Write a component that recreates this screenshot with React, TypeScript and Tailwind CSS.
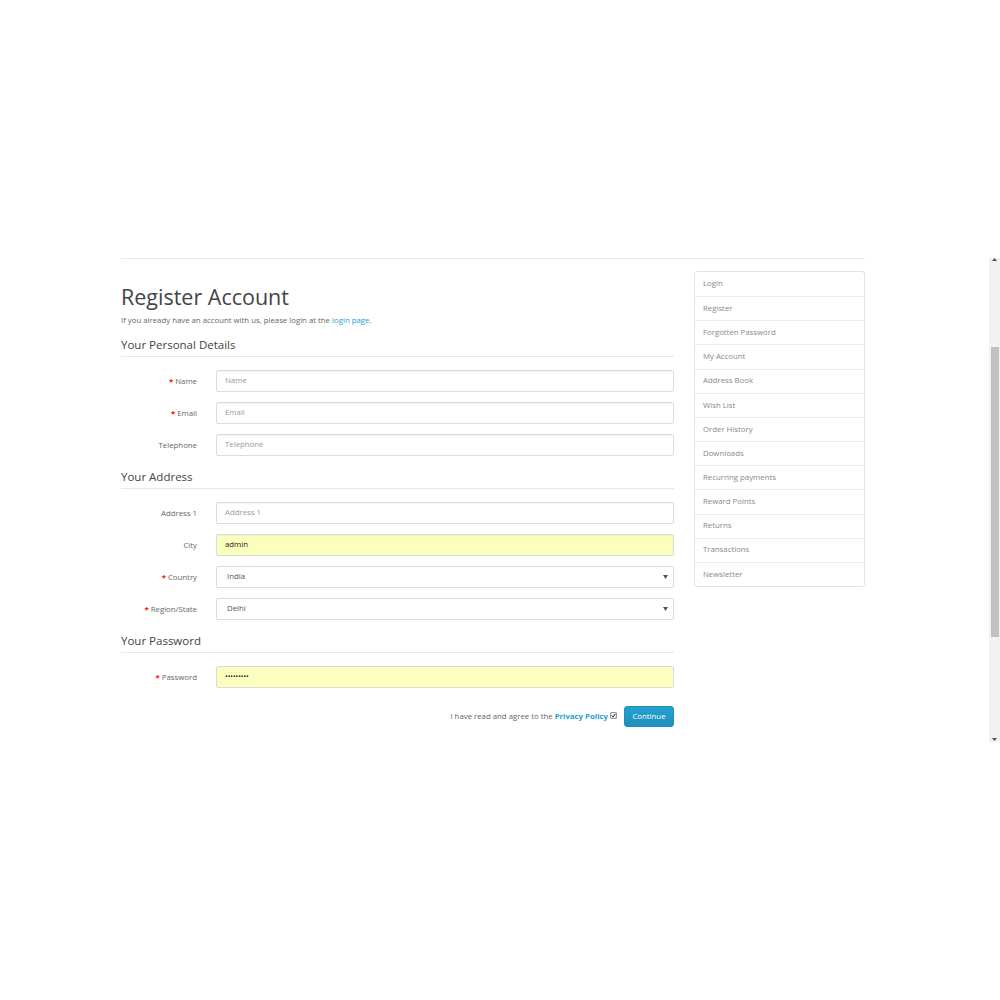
import React from "react";

const font = { fontFamily: '"Open Sans", "Liberation Sans", sans-serif' };

const sideLinks = [
  "Login",
  "Register",
  "Forgotten Password",
  "My Account",
  "Address Book",
  "Wish List",
  "Order History",
  "Downloads",
  "Recurring payments",
  "Reward Points",
  "Returns",
  "Transactions",
  "Newsletter",
];

function Label({ text, required }: { text: string; required?: boolean }) {
  return (
    <div className="w-[76px] shrink-0 text-right text-[7.8px] leading-[12px] text-[#666]">
      {required && <span className="mr-[2px] font-bold text-[#f00]">*</span>}
      {text}
    </div>
  );
}

function Field({
  label,
  required,
  placeholder,
  value,
  autofill,
}: {
  label: string;
  required?: boolean;
  placeholder?: string;
  value?: string;
  autofill?: boolean;
}) {
  return (
    <div className="flex h-[22px] items-center gap-[19px]">
      <Label text={label} required={required} />
      <div
        className={`flex h-[22px] flex-1 items-center rounded-[2px] border border-[#dcdcdc] px-[8px] text-[7.8px] shadow-[inset_0_1px_1px_rgba(0,0,0,0.04)] ${
          autofill ? "bg-[#faffbd] text-[#222]" : "bg-white text-[#999]"
        }`}
      >
        {value ?? placeholder}
      </div>
    </div>
  );
}

function SelectField({ label, value }: { label: string; value: string }) {
  return (
    <div className="flex h-[22px] items-center gap-[19px]">
      <Label text={label} required />
      <div className="flex h-[22px] flex-1 items-center justify-between rounded-[2px] border border-[#dcdcdc] bg-white pl-[10px] pr-[5px] text-[7.8px] text-[#555]">
        <span>{value}</span>
        <svg width="5" height="4" viewBox="0 0 5 4">
          <path d="M0 0 H5 L2.5 4 Z" fill="#555" />
        </svg>
      </div>
    </div>
  );
}

function Legend({ children, mt }: { children: React.ReactNode; mt: string }) {
  return (
    <div className={`${mt} border-b border-[#e8e8e8] pb-[2px] text-[11.5px] leading-[18px] text-[#444]`}>
      {children}
    </div>
  );
}

export default function App() {
  return (
    <div className="flex h-[1000px] w-[1000px] bg-white pt-[258px]" style={font}>
      <div className="ml-[121px] w-[744px] self-start border-t border-[#e8e8e8]">
        <div className="flex gap-[20px]">
          {/* form column */}
          <div className="w-[553px]">
            <h1 className="mt-[25px] text-[21.5px] leading-[26px] font-normal text-[#444]">Register Account</h1>
            <p className="mt-[4px] text-[7.8px] leading-[13px] text-[#666]">
              If you already have an account with us, please login at the{" "}
              <span className="text-[#23a1d1]">login page</span>.
            </p>

            <Legend mt="mt-[9px]">Your Personal Details</Legend>
            <div className="mt-[13px] flex flex-col gap-[10px]">
              <Field label="Name" required placeholder="Name" />
              <Field label="Email" required placeholder="Email" />
              <Field label="Telephone" placeholder="Telephone" />
            </div>

            <Legend mt="mt-[12px]">Your Address</Legend>
            <div className="mt-[13px] flex flex-col gap-[10px]">
              <Field label="Address 1" placeholder="Address 1" />
              <Field label="City" value="admin" autofill />
              <SelectField label="Country" value="India" />
              <SelectField label="Region/State" value="Delhi" />
            </div>

            <Legend mt="mt-[12px]">Your Password</Legend>
            <div className="mt-[13px] flex flex-col gap-[10px]">
              <div className="flex h-[22px] items-center gap-[19px]">
                <Label text="Password" required />
                <div className="flex h-[22px] flex-1 items-center rounded-[2px] border border-[#dcdcdc] bg-[#faffbd] px-[8px] text-[7px] text-[#222]">
                  •••••••••
                </div>
              </div>
            </div>

            <div className="mt-[18px] flex h-[21px] items-center justify-end">
              <span className="text-[7.8px] text-[#666]">
                I have read and agree to the <b className="font-bold text-[#23a1d1]">Privacy Policy</b>
              </span>
              <span className="ml-[2px] mb-[3px] flex h-[7px] w-[7px] items-center justify-center rounded-[1px] border border-[#999] bg-[#e6e6e6]">
                <svg width="5" height="5" viewBox="0 0 5 5">
                  <path d="M0.6 2.6 L2 4 L4.5 0.8" stroke="#333" strokeWidth="1" fill="none" />
                </svg>
              </span>
              <button className="ml-[7px] h-[21px] w-[50px] rounded-[3px] border border-[#1f90bb] bg-linear-to-b from-[#23a1d1] to-[#1f90bb] text-[7.8px] text-white">
                Continue
              </button>
            </div>
          </div>

          {/* sidebar */}
          <div className="mt-[12px] w-[171px] self-start rounded-[3px] border border-[#e3e3e3]">
            {sideLinks.map((l, i) => (
              <div
                key={l}
                className={`flex h-[24.17px] items-center pl-[8px] text-[7.8px] text-[#888] ${
                  i > 0 ? "border-t border-[#ececec]" : ""
                }`}
              >
                {l}
              </div>
            ))}
          </div>
        </div>
      </div>

      {/* scrollbar */}
      <div className="ml-auto flex h-[484px] w-[11px] flex-col items-center bg-[#f1f1f1]">
        <svg width="5" height="3" viewBox="0 0 5 3">
          <path d="M0 3 L2.5 0 L5 3 Z" fill="#505050" />
        </svg>
        <div className="mt-[86px] h-[290px] w-[8px] bg-[#c1c1c1]" />
        <div className="flex-1" />
        <svg width="5" height="3" viewBox="0 0 5 3" className="mb-[1px]">
          <path d="M0 0 H5 L2.5 3 Z" fill="#505050" />
        </svg>
      </div>
    </div>
  );
}
